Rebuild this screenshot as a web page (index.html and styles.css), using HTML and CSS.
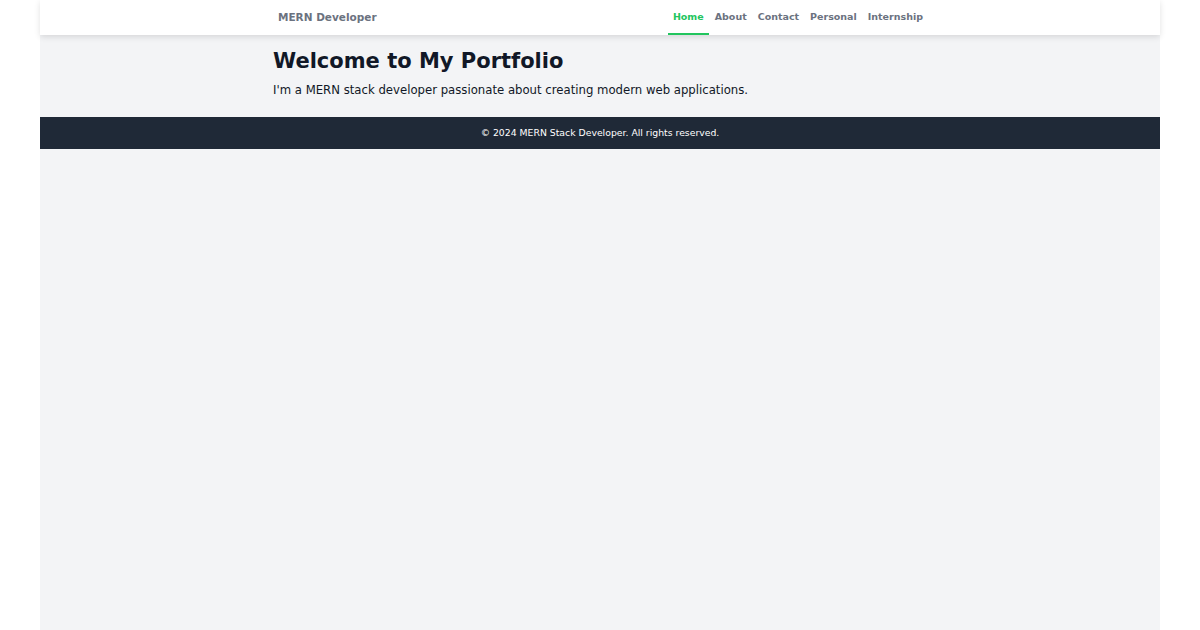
FILE: index.html
```html
<!DOCTYPE html>
<html lang="en">
<head>
<meta charset="utf-8">
<title>MERN Developer</title>
<link rel="stylesheet" href="styles.css">
</head>
<body>
<div class="app">
  <nav class="navbar">
    <div class="nav-inner">
      <span class="brand">MERN Developer</span>
      <ul class="links">
        <li><a class="link active" href="#">Home</a></li>
        <li><a class="link" href="#">About</a></li>
        <li><a class="link" href="#">Contact</a></li>
        <li><a class="link" href="#">Personal</a></li>
        <li><a class="link" href="#">Internship</a></li>
      </ul>
    </div>
  </nav>
  <main class="main">
    <h1 class="title">Welcome to My Portfolio</h1>
    <p class="lead">I'm a MERN stack developer passionate about creating modern web applications.</p>
  </main>
  <footer class="footer">© 2024 MERN Stack Developer. All rights reserved.</footer>
</div>
</body>
</html>
```
FILE: styles.css
```css
* { box-sizing: border-box; }
html, body { margin: 0; padding: 0; background: #ffffff; }
body { font-family: "DejaVu Sans", sans-serif; }
.app {
  width: 1120px;
  margin: 0 auto;
  min-height: 100vh;
  background: #f3f4f6;
}
.navbar {
  background: #ffffff;
  height: 35px;
  box-shadow: 0 2px 6px rgba(0,0,0,0.12);
  position: relative;
}
.nav-inner {
  width: 656px;
  margin: 0 auto;
  height: 35px;
  display: flex;
  align-items: stretch;
  justify-content: space-between;
  padding-left: 6px;
}
.brand {
  font-size: 10.5px;
  font-weight: bold;
  color: #6b7280;
  display: flex;
  align-items: center;
  padding-bottom: 2px;
}
.links {
  list-style: none;
  margin: 0;
  padding: 0;
  display: flex;
  align-items: stretch;
  gap: 1px;
}
.links li { display: flex; }
.link {
  display: flex;
  align-items: center;
  padding: 0 5px;
  font-size: 9.5px;
  font-weight: bold;
  color: #6b7280;
  text-decoration: none;
  border-bottom: 2px solid transparent;
}
.link.active {
  color: #22c55e;
  border-bottom-color: #22c55e;
}
.main {
  width: 656px;
  margin: 0 auto;
  padding: 12px 0 19px 1px;
}
.title {
  margin: 0;
  font-size: 21px;
  font-weight: bold;
  color: #111827;
  line-height: 28px;
}
.lead {
  margin: 7px 0 0;
  font-size: 11.7px;
  line-height: 16px;
  color: #111827;
}
.footer {
  background: #1f2937;
  color: #ffffff;
  text-align: center;
  font-size: 9.3px;
  height: 32px;
  line-height: 32px;
}
```
